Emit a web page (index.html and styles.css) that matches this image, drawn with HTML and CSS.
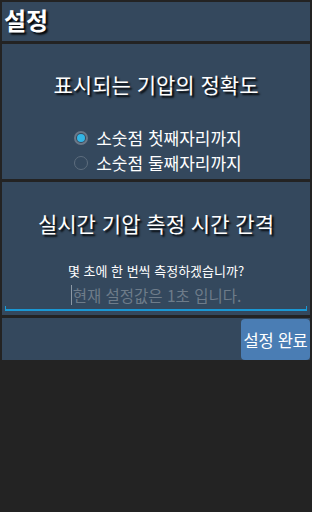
FILE: index.html
```html
<!DOCTYPE html>
<html lang="ko">
<head>
  <meta charset="UTF-8" />
  <meta name="viewport" content="width=device-width, initial-scale=1.0"/>
  <title>설정</title>
  <link rel="stylesheet" href="styles.css">
</head>
<body>
  <div class="screen">
    <div class="panel header">
      <h1>설정</h1>
    </div>

    <div class="panel accuracy">
      <h2>표시되는 기압의 정확도</h2>
      <div class="radio-group">
        <label class="radio checked"><span class="dot"></span>소숫점 첫째자리까지</label>
        <label class="radio"><span class="dot"></span>소숫점 둘째자리까지</label>
      </div>
    </div>

    <div class="panel interval">
      <h2>실시간 기압 측정 시간 간격</h2>
      <p class="question">몇 초에 한 번씩 측정하겠습니까?</p>
      <div class="field">
        <span class="caret"></span><span class="hint">현재 설정값은 1초 입니다.</span>
      </div>
      <div class="underline"></div>
    </div>

    <div class="panel footer">
      <button class="done">설정 완료</button>
    </div>
  </div>
</body>
</html>
```

FILE: styles.css
```css
body {
  margin: 0;
  background: #232323;
  font-family: "Noto Sans CJK KR", "Noto Sans", sans-serif;
  color: #fff;
}
.screen {
  display: flex;
  flex-direction: column;
  gap: 3px;
  padding: 2px 2px 0;
}
.panel {
  background: #34485d;
}
.header {
  height: 39px;
}
h1 {
  margin: 0;
  padding-left: 2px;
  font-size: 24px;
  line-height: 36px;
  font-weight: bold;
  text-shadow: 2px 2px 2px #000;
}
h2 {
  margin: 0;
  text-align: center;
  font-size: 21px;
  line-height: 28px;
  font-weight: normal;
  text-shadow: 2px 2px 2px #000;
}
.accuracy {
  height: 135px;
  padding-top: 26px;
  box-sizing: border-box;
}
.radio-group {
  display: flex;
  flex-direction: column;
  align-items: center;
  margin-top: 27px;
}
.radio {
  display: flex;
  align-items: center;
  gap: 8px;
  height: 25px;
  font-size: 17px;
  padding-left: 4px;
}
.dot {
  width: 14px;
  height: 14px;
  border-radius: 50%;
  border: 1px solid #5d6d7d;
  box-sizing: border-box;
  position: relative;
}
.checked .dot {
  border: 2px solid #6a7888;
}
.checked .dot::after {
  content: "";
  position: absolute;
  left: 1px;
  top: 1px;
  width: 8px;
  height: 8px;
  border-radius: 50%;
  background: #33b5e5;
}
.interval {
  height: 133px;
  padding: 27px 3px 0;
  box-sizing: border-box;
}
.question {
  margin: 26px 0 0;
  text-align: center;
  font-size: 13px;
  line-height: 16px;
}
.field {
  display: flex;
  align-items: center;
  justify-content: center;
  margin-top: 5px;
  height: 22px;
}
.caret {
  width: 1px;
  height: 20px;
  background: #8d99a5;
  margin-right: 1px;
}
.hint {
  font-size: 15.5px;
  color: #6e7c8a;
}
.underline {
  height: 3px;
  border: 0 solid #1a98d4;
  border-width: 0 1px 2px;
}
.footer {
  height: 42px;
  display: flex;
  justify-content: flex-end;
  align-items: flex-end;
}
.done {
  width: 69px;
  height: 41px;
  padding: 0;
  border: none;
  border-radius: 4px;
  background: #4a7db4;
  color: #fff;
  font-family: "Noto Sans CJK KR", sans-serif;
  font-size: 16.5px;
  letter-spacing: -0.3px;
  white-space: nowrap;
  text-align: center;
}
```
